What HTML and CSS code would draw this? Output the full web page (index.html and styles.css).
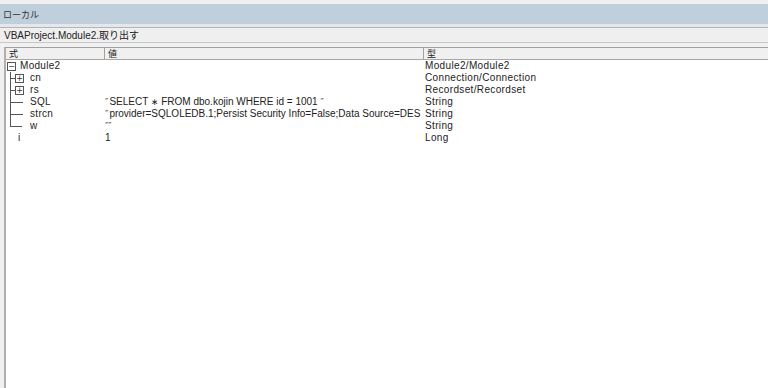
FILE: index.html
```html
<!DOCTYPE html>
<html lang="ja">
<head>
<meta charset="utf-8">
<link rel="stylesheet" href="styles.css">
</head>
<body>
<div class="window">
  <div class="titlebar">ローカル</div>
  <div class="context">VBAProject.Module2.取り出す</div>
  <div class="list">
    <div class="header">
      <div class="hcell c1">式</div>
      <div class="hcell c2">値</div>
      <div class="hcell c3">型</div>
    </div>
    <div class="rows">
      <div class="row">
        <div class="cell c1"><span class="box">−</span>Module2</div>
        <div class="cell c2"></div>
        <div class="cell c3">Module2/Module2</div>
      </div>
      <div class="row">
        <div class="cell c1"><span class="tree tmid"></span><span class="box child">+</span>cn</div>
        <div class="cell c2"></div>
        <div class="cell c3">Connection/Connection</div>
      </div>
      <div class="row">
        <div class="cell c1"><span class="tree tmid"></span><span class="box child">+</span>rs</div>
        <div class="cell c2"></div>
        <div class="cell c3">Recordset/Recordset</div>
      </div>
      <div class="row">
        <div class="cell c1"><span class="tree tmid long"></span>SQL</div>
        <div class="cell c2"><span class="q">″</span>SELECT <span class="star">∗</span> FROM dbo.kojin WHERE id = 1001 <span class="q">″</span></div>
        <div class="cell c3">String</div>
      </div>
      <div class="row">
        <div class="cell c1"><span class="tree tmid long"></span>strcn</div>
        <div class="cell c2"><span class="q">″</span>provider=SQLOLEDB.1;Persist Security Info=False;Data Source=DES</div>
        <div class="cell c3">String</div>
      </div>
      <div class="row">
        <div class="cell c1"><span class="tree tend long"></span>w</div>
        <div class="cell c2"><span class="q">″″</span></div>
        <div class="cell c3">String</div>
      </div>
      <div class="row">
        <div class="cell c1 plain">i</div>
        <div class="cell c2">1</div>
        <div class="cell c3">Long</div>
      </div>
    </div>
  </div>
</div>
</body>
</html>
```
FILE: styles.css
```css
html, body {
  margin: 0;
  padding: 0;
  height: 100%;
}
body {
  background: #f0f0f0;
  font-family: "Liberation Sans", "Noto Sans CJK JP", sans-serif;
  font-size: 10px;
  color: #222;
  overflow: hidden;
}
.window {
  display: flex;
  flex-direction: column;
  height: 388px;
  padding-top: 4px;
  box-sizing: border-box;
}
.titlebar {
  height: 20px;
  line-height: 21px;
  background: #bfcfdc;
  padding-left: 3px;
  font-family: "Noto Sans CJK JP", sans-serif;
  font-size: 9px;
  color: #333;
  border-bottom: 3px solid #e4e8ec;
}
.context {
  height: 14px;
  line-height: 15px;
  background: #efefef;
  border-top: 1px solid #b4b4b4;
  border-bottom: 1px solid #c8c8c8;
  padding-left: 4px;
  font-size: 10px;
  color: #222;
}
.list {
  flex: 1;
  margin-top: 4px;
  margin-left: 4px;
  border-left: 2px solid #b0b0b0;
  border-top: 1px solid #a0a0a0;
  background: #fff;
  display: flex;
  flex-direction: column;
}
.header {
  display: flex;
  height: 11px;
  background: #f0f0f0;
  border-bottom: 1px solid #a8a8a8;
  line-height: 11px;
  font-family: "Noto Sans CJK JP", sans-serif;
  font-size: 9px;
}
.hcell {
  border-right: 1px solid #a0a0a0;
  padding-left: 3px;
  box-sizing: border-box;
}
.c1 { width: 99px; flex: none; }
.c2 { width: 319px; flex: none; }
.c3 { flex: 1; }
.hcell.c3 { border-right: none; }
.rows {
  padding-top: 0;
}
.row {
  display: flex;
  height: 12px;
  line-height: 12px;
  white-space: nowrap;
}
.cell {
  overflow: hidden;
  box-sizing: border-box;
}
.cell.c1 {
  display: flex;
  align-items: center;
  padding-left: 1px;
  letter-spacing: 0.3px;
}
.cell.c2 { padding-left: 0; letter-spacing: 0; }
.cell.c3 { padding-left: 1px; letter-spacing: 0.35px; }
.q {
  font-family: "DejaVu Sans", sans-serif;
  font-size: 9px;
  color: #444;
  margin-right: 1px;
}
.star {
  font-family: "DejaVu Sans", sans-serif;
  font-size: 9px;
}
.box {
  width: 7px;
  height: 7px;
  border: 1px solid #555;
  font-size: 8px;
  line-height: 7px;
  text-align: center;
  margin-right: 4px;
  color: #333;
  flex: none;
  font-family: "DejaVu Sans", sans-serif;
  letter-spacing: 0;
}
.box.child { margin-right: 6px; }
.tree {
  flex: none;
  height: 12px;
  width: 5px;
  margin-left: 3px;
  border-left: 1px solid #555;
  box-sizing: border-box;
  position: relative;
}
.tree::after {
  content: "";
  position: absolute;
  left: 0;
  top: 6px;
  width: 4px;
  border-top: 1px solid #555;
}
.tree.tend {
  border-left: none;
}
.tree.tend::before {
  content: "";
  position: absolute;
  left: 0;
  top: 0;
  height: 7px;
  border-left: 1px solid #555;
}
.tree.long { width: 14px; margin-right: 6px; }
.tree.long::after { width: 12px; }
.cell.plain { padding-left: 12px; }
```
